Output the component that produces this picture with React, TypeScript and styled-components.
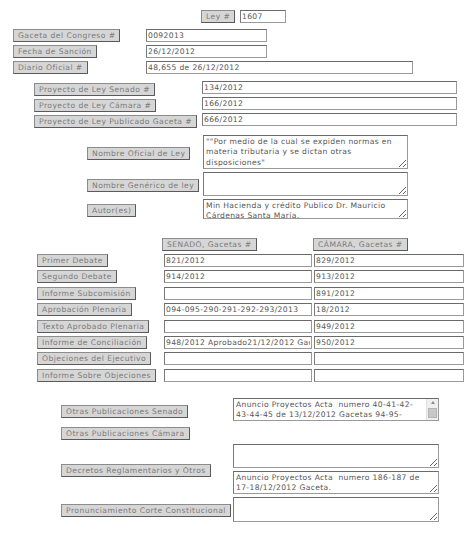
import React from "react";
import styled, { createGlobalStyle } from "styled-components";

const GlobalStyle = createGlobalStyle`
  html, body { margin: 0; padding: 0; background: #ffffff; }
  body { font-family: "DejaVu Sans", Verdana, sans-serif; }
  * { box-sizing: border-box; }
`;

const Page = styled.div`
  width: 472px;
  min-height: 541px;
  padding-top: 10px;
  display: flex;
  flex-direction: column;
  background: #fff;
`;

const Row = styled.div<{ $indent: number; $field: number; $mt: number; $align?: string }>`
  display: grid;
  grid-template-columns: ${(p) => p.$field - p.$indent}px auto;
  padding-left: ${(p) => p.$indent}px;
  margin-top: ${(p) => p.$mt}px;
  align-items: ${(p) => p.$align ?? "center"};
`;

const Label = styled.span<{ $mt?: number }>`
  justify-self: start;
  display: inline-flex;
  align-items: center;
  height: 13px;
  margin-top: ${(p) => p.$mt ?? 0}px;
  padding: 0 4px 0 4px;
  font-size: 7.6px;
  letter-spacing: 0.45px;
  color: #7a7a7a;
  background: #d6d6d6;
  border: 1px solid #8c8c8c;
  border-right-color: #5a5a5a;
  border-bottom-color: #5a5a5a;
  white-space: nowrap;
`;

const Field = styled.input<{ $w: number }>`
  width: ${(p) => p.$w}px;
  height: 13px;
  margin: 0;
  padding: 0 1px;
  font-family: "DejaVu Sans", Verdana, sans-serif;
  font-size: 7.6px;
  letter-spacing: 0.35px;
  color: #555;
  background: #fff;
  border: 1px solid #9a9a9a;
  border-top-color: #6a6a6a;
  border-left-color: #7a7a7a;
  outline: none;
`;

const Area = styled.textarea<{ $w: number; $h: number; $mt?: number }>`
  width: ${(p) => p.$w}px;
  height: ${(p) => p.$h}px;
  margin: ${(p) => p.$mt ?? 0}px 0 0 0;
  padding: 1px 8px 1px 2px;
  font-family: "DejaVu Sans", Verdana, sans-serif;
  font-size: 7.6px;
  line-height: 10.4px;
  letter-spacing: 0.35px;
  color: #555;
  background: #fff;
  border: 1px solid #9a9a9a;
  border-top-color: #6a6a6a;
  border-left-color: #7a7a7a;
  outline: none;
  display: block;
  overflow: hidden;
`;

const ScrollBox = styled.div<{ $w: number; $h: number }>`
  width: ${(p) => p.$w}px;
  height: ${(p) => p.$h}px;
  display: flex;
  background: #fff;
  border: 1px solid #9a9a9a;
  border-top-color: #6a6a6a;
  border-left-color: #7a7a7a;
`;

const BareArea = styled.textarea`
  flex: 1;
  min-width: 0;
  height: 100%;
  margin: 0;
  padding: 1px 3px 0 2px;
  font-family: "DejaVu Sans", Verdana, sans-serif;
  font-size: 7.6px;
  line-height: 10.4px;
  letter-spacing: 0.35px;
  color: #555;
  background: transparent;
  border: none;
  outline: none;
  resize: none;
  overflow: hidden;
`;

const ScrollBar = styled.div`
  width: 12px;
  display: flex;
  flex-direction: column;
  align-items: stretch;
  background: #efefef;
  border-left: 1px solid #e0e0e0;
`;

const ScrollArrow = styled.div`
  height: 8px;
  display: flex;
  align-items: center;
  justify-content: center;
  &::before {
    content: "";
    border-left: 2.5px solid transparent;
    border-right: 2.5px solid transparent;
    border-bottom: 3px solid #8a8a8a;
  }
`;

const ScrollThumb = styled.div`
  flex: 1;
  margin: 1px 1px 2px 1px;
  background: #c8c8c8;
  border: 1px solid #b4b4b4;
`;

const GacetaHead = styled.div`
  display: grid;
  grid-template-columns: 151px auto;
  padding-left: 162px;
  margin-top: 19px;
`;

const GacetaTable = styled.div`
  display: flex;
  flex-direction: column;
  gap: 3.4px;
  margin-top: 3px;
`;

const GacetaRow = styled.div`
  display: grid;
  grid-template-columns: 125px 148px 150px;
  column-gap: 2px;
  padding-left: 37px;
  align-items: center;
`;

const Bottom = styled.div`
  display: grid;
  grid-template-columns: 172px 206px;
  padding-left: 61px;
  margin-top: 16px;
`;

const Column = styled.div`
  display: flex;
  flex-direction: column;
  align-items: flex-start;
`;

const senado: [string, string, string][] = [
  ["Primer Debate", "821/2012", "829/2012"],
  ["Segundo Debate", "914/2012", "913/2012"],
  ["Informe Subcomisión", "", "891/2012"],
  ["Aprobación Plenaria", "094-095-290-291-292-293/2013", "18/2012"],
  ["Texto Aprobado Plenaria", "", "949/2012"],
  ["Informe de Conciliación", "948/2012 Aprobado21/12/2012 Gaceta", "950/2012"],
  ["Objeciones del Ejecutivo", "", ""],
  ["Informe Sobre Objeciones", "", ""],
];

export default function App() {
  return (
    <Page>
      <GlobalStyle />
      <Row $indent={201} $field={240} $mt={0}>
        <Label>Ley #</Label>
        <Field $w={46} readOnly value="1607" />
      </Row>

      <Row $indent={13} $field={146} $mt={6}>
        <Label>Gaceta del Congreso #</Label>
        <Field $w={121} readOnly value="0092013" />
      </Row>
      <Row $indent={13} $field={146} $mt={3}>
        <Label>Fecha de Sanción</Label>
        <Field $w={121} readOnly value="26/12/2012" />
      </Row>
      <Row $indent={13} $field={146} $mt={3}>
        <Label>Diario Oficial #</Label>
        <Field $w={267} readOnly value="48,655 de 26/12/2012" />
      </Row>

      <Row $indent={34} $field={202} $mt={7} $align="start">
        <Label $mt={2}>Proyecto de Ley Senado #</Label>
        <Field $w={255} readOnly value="134/2012" />
      </Row>
      <Row $indent={34} $field={202} $mt={1} $align="start">
        <Label $mt={2}>Proyecto de Ley Cámara #</Label>
        <Field $w={255} readOnly value="166/2012" />
      </Row>
      <Row $indent={34} $field={202} $mt={1} $align="start">
        <Label $mt={2}>Proyecto de Ley Publicado Gaceta #</Label>
        <Field $w={255} readOnly value="666/2012" />
      </Row>

      <Row $indent={87} $field={203} $mt={7}>
        <Label $mt={3}>Nombre Oficial de Ley</Label>
        <Area
          $w={205}
          $h={34}
          readOnly
          value={'""Por medio de la cual se expiden normas en materia tributaria y se dictan otras disposiciones"'}
        />
      </Row>
      <Row $indent={87} $field={203} $mt={3}>
        <Label $mt={3}>Nombre Genérico de ley</Label>
        <Area $w={205} $h={24} readOnly value="" />
      </Row>
      <Row $indent={87} $field={203} $mt={3}>
        <Label $mt={3}>Autor(es)</Label>
        <Area
          $w={205}
          $h={20}
          readOnly
          value="Min Hacienda y crédito Publico Dr. Mauricio Cárdenas Santa María."
        />
      </Row>

      <GacetaHead>
        <Label>SENADO, Gacetas #</Label>
        <Label>CÁMARA, Gacetas #</Label>
      </GacetaHead>
      <GacetaTable>
        {senado.map(([label, s, c]) => (
          <GacetaRow key={label}>
            <Label>{label}</Label>
            <Field $w={148} readOnly value={s} />
            <Field $w={150} readOnly value={c} />
          </GacetaRow>
        ))}
      </GacetaTable>

      <Bottom>
        <Column>
          <Label $mt={7}>Otras Publicaciones Senado</Label>
          <Label $mt={9}>Otras Publicaciones Cámara</Label>
          <Label $mt={24}>Decretos Reglamentarios y Otros</Label>
          <Label $mt={27}>Pronunciamiento Corte Constitucional</Label>
        </Column>
        <Column>
          <ScrollBox $w={206} $h={23}>
            <BareArea
              readOnly
              value="Anuncio Proyectos Acta  numero 40-41-42-43-44-45 de 13/12/2012 Gacetas 94-95-96/2012 Senado"
            />
            <ScrollBar>
              <ScrollArrow />
              <ScrollThumb />
            </ScrollBar>
          </ScrollBox>
          <Area $w={206} $h={24} $mt={23} readOnly value="" />
          <Area
            $w={206}
            $h={23}
            $mt={3}
            readOnly
            value="Anuncio Proyectos Acta  numero 186-187 de 17-18/12/2012 Gaceta."
          />
          <Area $w={206} $h={25} $mt={3} readOnly value="" />
        </Column>
      </Bottom>
    </Page>
  );
}
